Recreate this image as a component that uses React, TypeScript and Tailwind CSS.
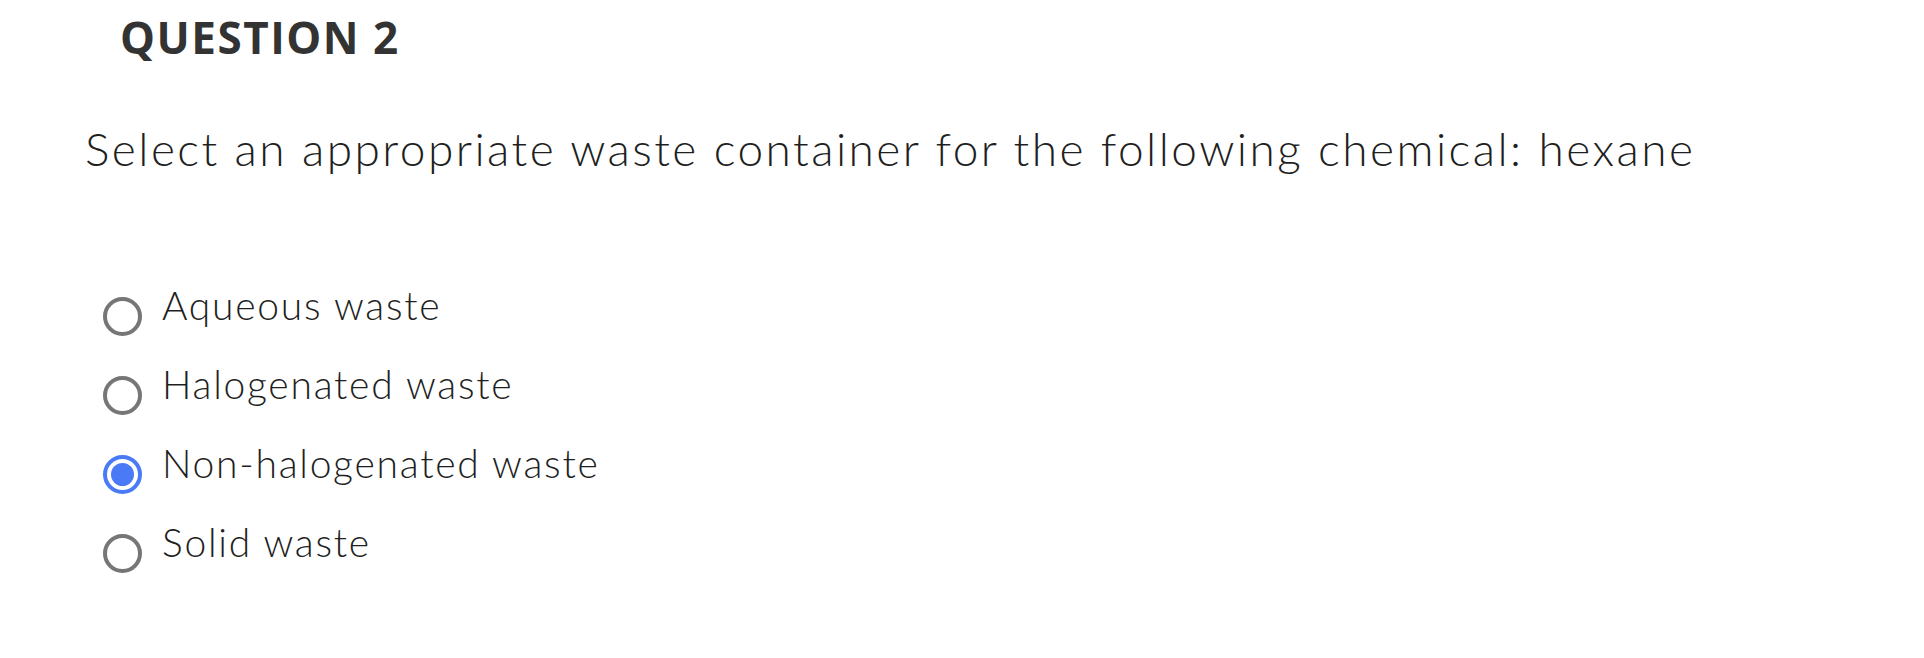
const OPTIONS = [
  { label: 'Aqueous waste', checked: false },
  { label: 'Halogenated waste', checked: false },
  { label: 'Non-halogenated waste', checked: true },
  { label: 'Solid waste', checked: false },
];

function Radio({ checked }: { checked: boolean }) {
  if (checked) {
    return (
      <span className="mt-[16px] flex h-[39px] w-[39px] shrink-0 items-center justify-center rounded-full border-[4px] border-[#4a7af6] bg-white">
        <span className="h-[23px] w-[23px] rounded-full bg-[#4a7af6]" />
      </span>
    );
  }
  return <span className="mt-[16px] h-[39px] w-[39px] shrink-0 rounded-full border-[4px] border-[#767676] bg-white" />;
}

export default function App() {
  return (
    <div className="min-h-[658px] w-full bg-white text-[#1f1f1f]">
      <h2
        className="pl-[120px] pt-[11px] text-[44px] font-bold leading-[52px] tracking-[1.5px] text-[#333]"
        style={{ fontFamily: '"Open Sans", sans-serif' }}
      >
        QUESTION 2
      </h2>

      <div className="font-['Lato',sans-serif] font-light">
        <p className="mt-[58px] pl-[85px] text-[46px] leading-[55px] tracking-[2.45px]">
          Select an appropriate waste container for the following chemical: hexane
        </p>

        <div className="mt-[105px] flex flex-col pl-[103px]">
          {OPTIONS.map((o) => (
            <label key={o.label} className="flex h-[79px] items-start gap-[20px]">
              <Radio checked={o.checked} />
              <span className="text-[39px] leading-[48px] tracking-[1.75px]">{o.label}</span>
            </label>
          ))}
        </div>
      </div>
    </div>
  );
}
